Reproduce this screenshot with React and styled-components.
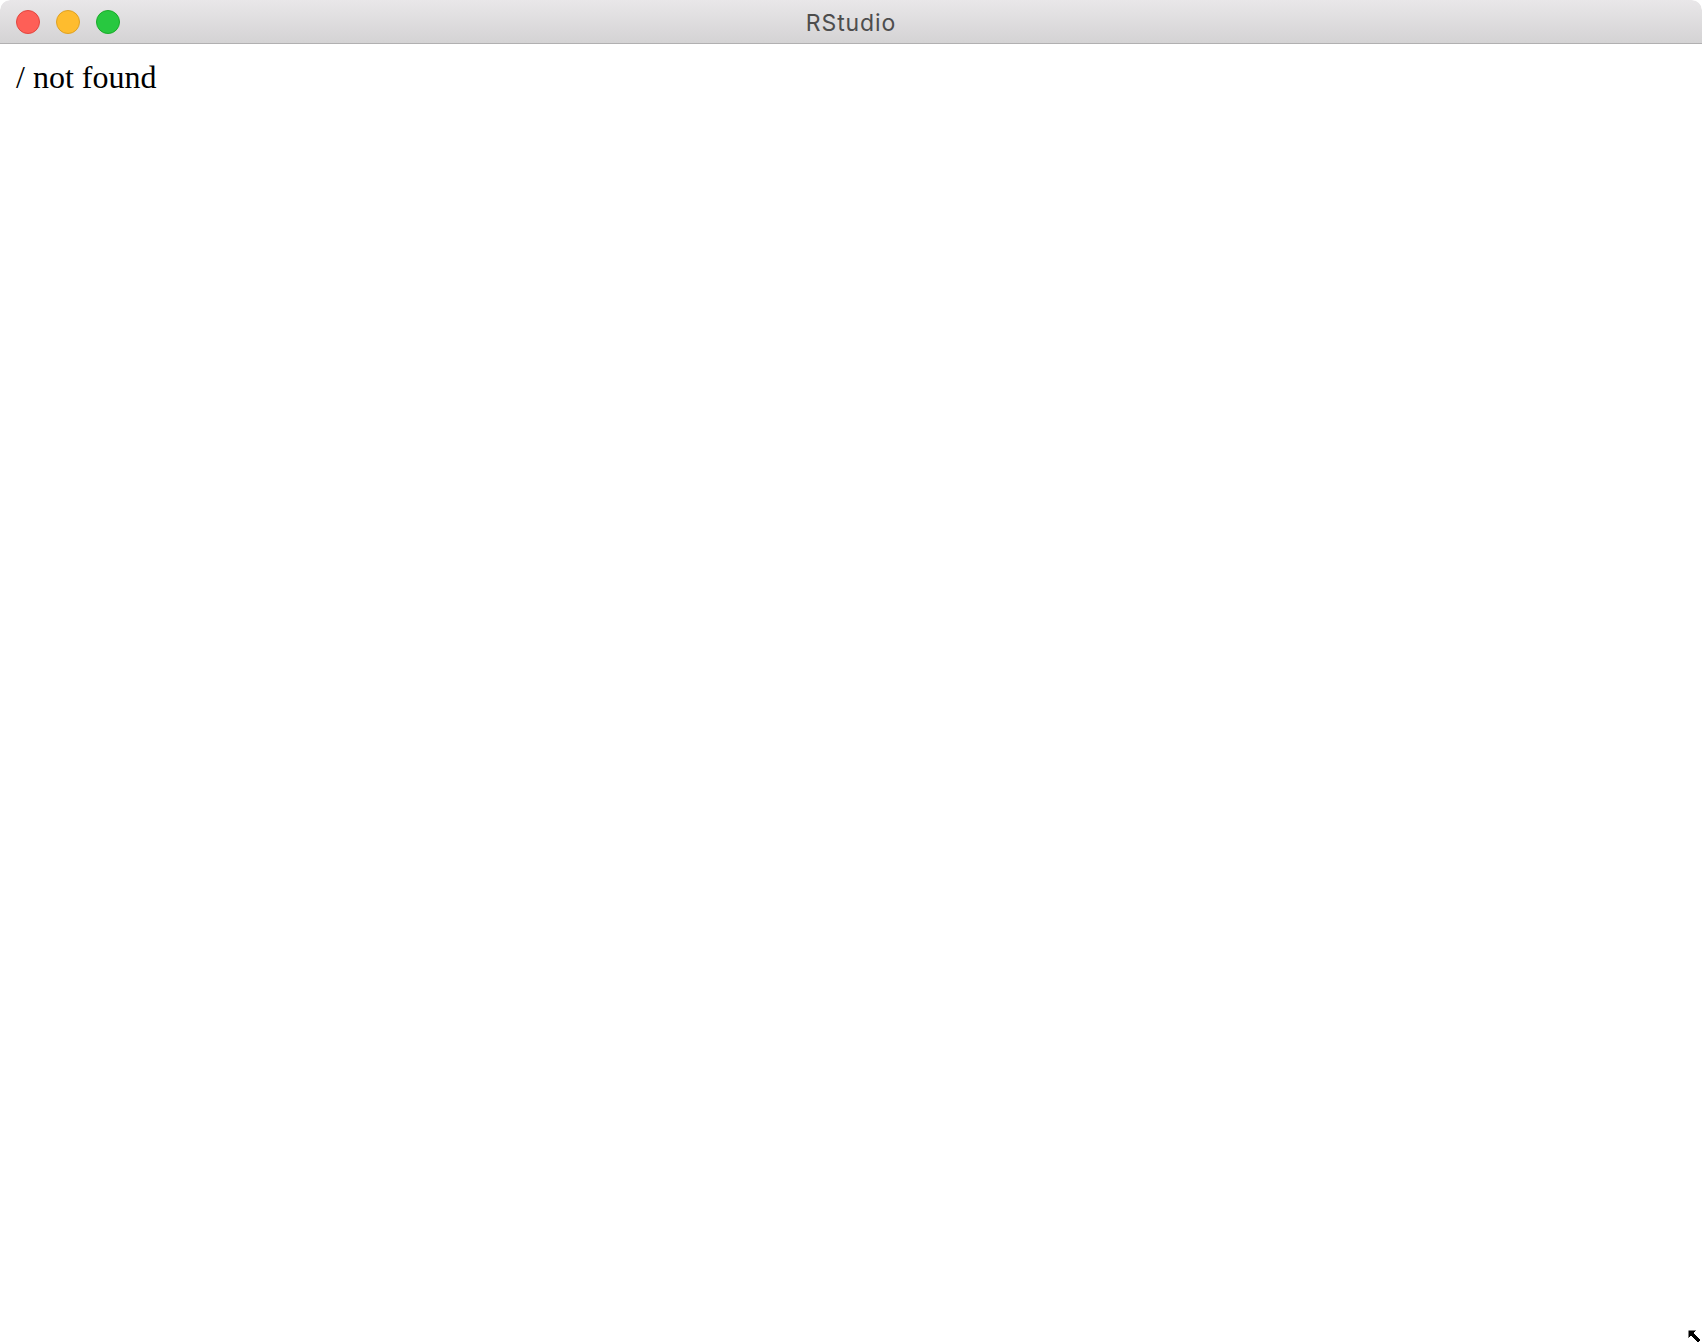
import React from 'react';
import styled, { createGlobalStyle } from 'styled-components';

const GlobalStyle = createGlobalStyle`
  html, body {
    margin: 0;
    padding: 0;
    background: #ffffff;
  }
  #root {
    height: 100vh;
  }
`;

const Window = styled.div`
  width: 100%;
  height: 100vh;
  display: flex;
  flex-direction: column;
  background: #ffffff;
  border-radius: 10px 10px 0 0;
  overflow: hidden;
  position: relative;
`;

const TitleBar = styled.div`
  height: 43px;
  flex: 0 0 auto;
  display: flex;
  align-items: center;
  position: relative;
  background: linear-gradient(to bottom, #e9e7e9, #d4d3d4);
  border-bottom: 1px solid #b1b0b1;
  border-radius: 10px 10px 0 0;
`;

const Lights = styled.div`
  display: flex;
  gap: 16px;
  padding-left: 16px;
`;

const Light = styled.span`
  width: 24px;
  height: 24px;
  box-sizing: border-box;
  border-radius: 50%;
  background: ${(p) => p.$fill};
  border: 1px solid ${(p) => p.$edge};
`;

const Title = styled.div`
  position: absolute;
  left: 0;
  right: 0;
  top: 9px;
  text-align: center;
  font-family: Inter, "Liberation Sans", sans-serif;
  font-size: 23px;
  letter-spacing: 0.9px;
  line-height: 28px;
  color: #4d4d4d;
  pointer-events: none;
`;

const Content = styled.div`
  flex: 1;
  padding: 15px 16px;
  font-family: "Liberation Serif", "Times New Roman", serif;
  font-size: 32px;
  color: #000;
`;

const ResizeGrip = styled.svg`
  position: absolute;
  right: 0;
  bottom: 0;
`;

export default function App() {
  return (
    <>
      <GlobalStyle />
      <Window>
        <TitleBar>
          <Lights>
            <Light $fill="#fe5f57" $edge="#e2463f" />
            <Light $fill="#febc2e" $edge="#dea123" />
            <Light $fill="#28c840" $edge="#1aab29" />
          </Lights>
          <Title>RStudio</Title>
        </TitleBar>
        <Content>/ not found</Content>
        <ResizeGrip width="16" height="16" viewBox="0 0 16 16">
          <path d="M2 2 L11 2 L8 5 L15 12 L12 15 L5 8 L2 11 Z" fill="#000" stroke="#fff" strokeWidth="1" />
        </ResizeGrip>
      </Window>
    </>
  );
}
